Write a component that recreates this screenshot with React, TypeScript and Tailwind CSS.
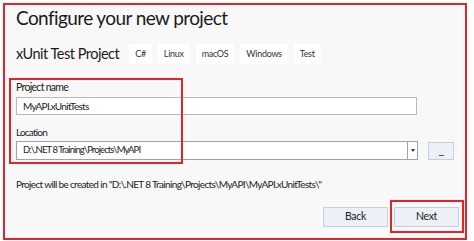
export default function App() {
  const tags = ["C#", "Linux", "macOS", "Windows", "Test"];

  return (
    <div className="relative w-[474px] h-[241px] bg-white font-['Lato',sans-serif] text-[#1e1e1e]">
      <div className="absolute left-[3px] top-[3px] w-[464px] h-[237px] border-2 border-[#e3242b] bg-[#f8f8f8]" />

      <div className="relative flex flex-col pl-[16px] pt-[5px]">
        <h1 className="text-[19px] leading-[26px] font-normal tracking-[-0.6px] text-[#1b1b1b]">
          Configure your new project
        </h1>

        <div className="flex items-center mt-[13px] h-[20px]">
          <span className="text-[14.5px] leading-[20px] tracking-[-0.5px] text-[#1b1b1b] mr-[10px]">
            xUnit Test Project
          </span>
          <div className="flex gap-[6px]">
            {tags.map((t) => (
              <span
                key={t}
                className="bg-white px-[6px] h-[20px] flex items-center text-[9px] tracking-[-0.3px] text-[#333]"
              >
                {t}
              </span>
            ))}
          </div>
        </div>

        <label className="mt-[16px] text-[10.5px] leading-[14px] tracking-[-0.7px] text-[#222]">
          Project name
        </label>
        <div className="mt-[3px] w-[401px] h-[18px] border border-[#b9b9b9] bg-white flex items-center px-[6px] text-[10px] tracking-[-0.7px] text-[#222]">
          MyAPI.xUnitTests
        </div>

        <label className="mt-[10px] text-[10px] leading-[14px] tracking-[-0.8px] text-[#222]">
          Location
        </label>
        <div className="flex items-center mt-[2px]">
          <div className="w-[402px] h-[19px] border border-[#9aa3b3] bg-white flex items-center text-[9.5px] tracking-[-0.9px] text-[#222]">
            <span className="flex-1 px-[6px]">D:\.NET 8 Training\Projects\MyAPI</span>
            <span className="w-[10px] h-full border-l border-[#9aa3b3] flex items-center justify-center">
              <span className="w-0 h-0 border-l-[2px] border-r-[2px] border-t-[3px] border-l-transparent border-r-transparent border-t-[#333]" />
            </span>
          </div>
          <div className="ml-[10px] w-[26px] h-[18px] border border-[#c6cfdc] bg-[#edf1f7] flex items-end justify-center pb-[3px]">
            <span className="w-[5px] h-px bg-[#555]" />
          </div>
        </div>

        <p className="mt-[17px] text-[10px] leading-[14px] tracking-[-0.65px] text-[#222]">
          Project will be created in "D:\.NET 8 Training\Projects\MyAPI\MyAPI.xUnitTests\"
        </p>

        <div className="flex justify-end gap-[6px] mt-[16px] pr-[15px]">
          <button className="w-[65px] h-[20px] border border-[#c6cfdc] bg-[#edf1f7] text-[10.5px] tracking-[-0.3px] text-[#222]">
            Back
          </button>
          <button className="w-[65px] h-[20px] border border-[#c6cfdc] bg-[#edf1f7] text-[10.5px] tracking-[-0.3px] text-[#222]">
            Next
          </button>
        </div>
      </div>

      {/* annotation boxes */}
      <div className="absolute left-[9px] top-[78px] w-[174px] h-[86px] border-2 border-[#e3242b]" />
      <div className="absolute left-[390px] top-[200px] w-[74px] h-[33px] border-2 border-[#e3242b]" />
    </div>
  );
}
